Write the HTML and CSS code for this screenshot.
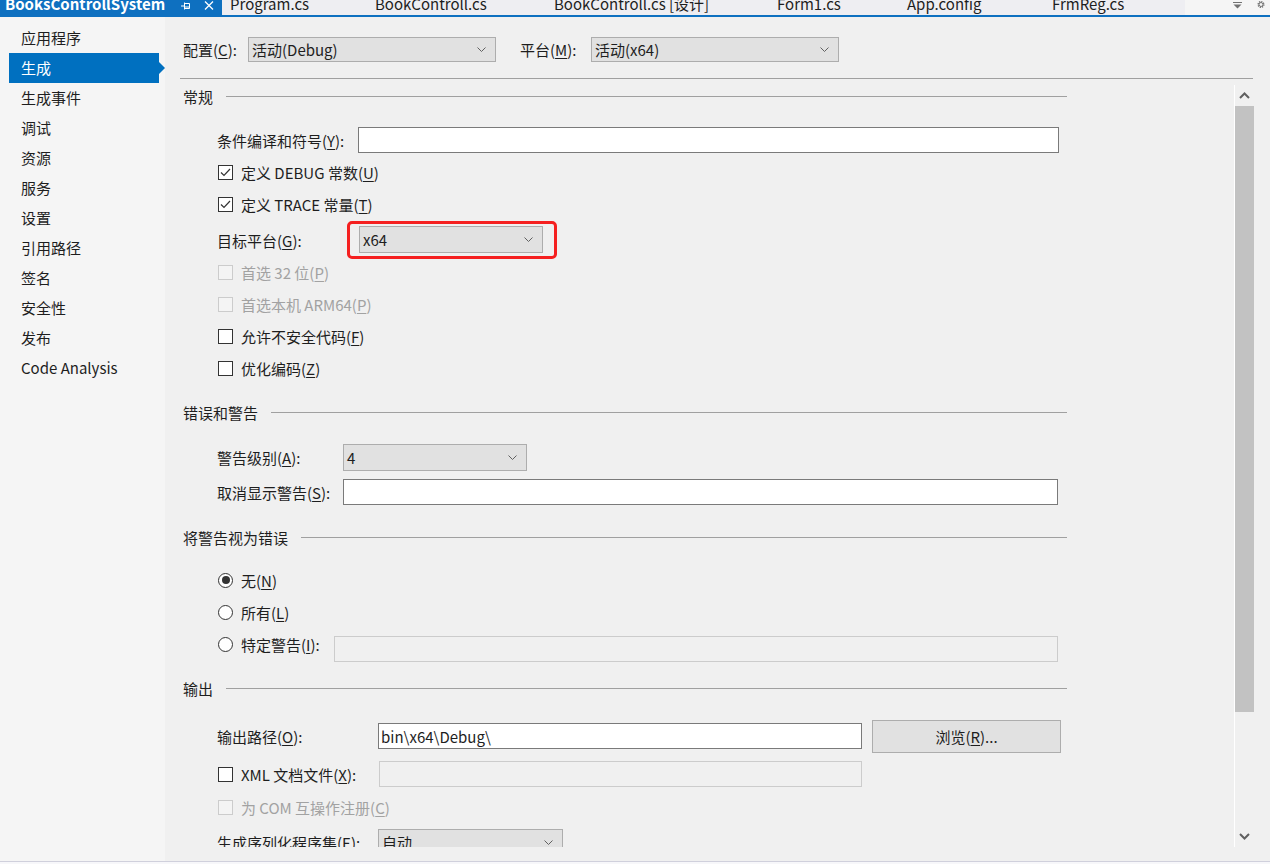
FILE: index.html
```html
<!DOCTYPE html>
<html lang="zh-CN">
<head>
<meta charset="utf-8">
<title>BooksControllSystem - 生成</title>
<link rel="stylesheet" href="styles.css">
</head>
<body>
<div class="tabbar">
  <div class="tab tab-active">
    <span class="tab-text">BooksControllSystem</span>
    <svg class="pin" width="10" height="8" viewBox="0 0 10 8"><path d="M0 4h3M3.5 0.5v7M3.5 1.5h5v5h-5M3.5 5h5" fill="none" stroke="#fff" stroke-width="1"/></svg>
    <svg class="close" width="10" height="9" viewBox="0 0 10 9"><path d="M1 0.5l8 8M9 0.5l-8 8" fill="none" stroke="#fff" stroke-width="1.3"/></svg>
  </div>
  <div class="tab t145"><span class="tab-text">Program.cs</span></div>
  <div class="tab t179"><span class="tab-text">BookControll.cs</span></div>
  <div class="tab t223"><span class="tab-text">BookControll.cs [设计]</span></div>
  <div class="tab t130"><span class="tab-text">Form1.cs</span></div>
  <div class="tab t145"><span class="tab-text">App.config</span></div>
  <div class="tab t141"><span class="tab-text">FrmReg.cs</span></div>
  <div class="tab-rest">
    <svg width="9" height="7" viewBox="0 0 9 7"><path d="M0 0.5h9" stroke="#717171"/><path d="M0.5 2.5h8l-4 4z" fill="#717171"/></svg>
    <svg class="gear" width="12" height="9" viewBox="0 -3 12 12"><circle cx="6" cy="3" r="3.6" fill="none" stroke="#717171" stroke-width="2.2" stroke-dasharray="1.6 1.2"/><circle cx="6" cy="3" r="2.6" fill="none" stroke="#717171" stroke-width="1.2"/></svg>
  </div>
</div>

<div class="window">
  <div class="nav">
    <div class="nav-item">应用程序</div>
    <div class="nav-item selected">生成</div>
    <div class="nav-item">生成事件</div>
    <div class="nav-item">调试</div>
    <div class="nav-item">资源</div>
    <div class="nav-item">服务</div>
    <div class="nav-item">设置</div>
    <div class="nav-item">引用路径</div>
    <div class="nav-item">签名</div>
    <div class="nav-item">安全性</div>
    <div class="nav-item">发布</div>
    <div class="nav-item">Code Analysis</div>
  </div>

  <div class="panel">
    <div class="config-row">
      <span class="lbl l65">配置(<u>C</u>):</span>
      <div class="ddl w248"><span>活动(Debug)</span><svg width="9" height="5" viewBox="0 0 9 5"><path d="M0.5 0.5l4 4 4-4" fill="none" stroke="#606060"/></svg></div>
      <span class="lbl l71 gap24">平台(<u>M</u>):</span>
      <div class="ddl w248"><span>活动(x64)</span><svg width="9" height="5" viewBox="0 0 9 5"><path d="M0.5 0.5l4 4 4-4" fill="none" stroke="#606060"/></svg></div>
    </div>
    <div class="sep"></div>

    <div class="scroll">
      <div class="page">
        <div class="group-head first">常规</div>

        <div class="row m18">
          <span class="lbl l141">条件编译和符号(<u>Y</u>):</span>
          <div class="txt w701"></div>
        </div>
        <div class="row">
          <span class="chk checked"><svg width="11" height="9" viewBox="0 0 11 9"><path d="M1 4.5l3 3 6-6.5" fill="none" stroke="#333" stroke-width="1.2"/></svg></span>
          <span class="opt">定义 DEBUG 常数(<u>U</u>)</span>
        </div>
        <div class="row">
          <span class="chk checked"><svg width="11" height="9" viewBox="0 0 11 9"><path d="M1 4.5l3 3 6-6.5" fill="none" stroke="#333" stroke-width="1.2"/></svg></span>
          <span class="opt">定义 TRACE 常量(<u>T</u>)</span>
        </div>
        <div class="row m4">
          <span class="lbl l130">目标平台(<u>G</u>):</span>
          <div class="mark">
            <div class="ddl w184 h27"><span>x64</span><svg width="9" height="5" viewBox="0 0 9 5"><path d="M0.5 0.5l4 4 4-4" fill="none" stroke="#606060"/></svg></div>
          </div>
        </div>
        <div class="row off">
          <span class="chk"></span>
          <span class="opt">首选 32 位(<u>P</u>)</span>
        </div>
        <div class="row off">
          <span class="chk"></span>
          <span class="opt">首选本机 ARM64(<u>P</u>)</span>
        </div>
        <div class="row">
          <span class="chk"></span>
          <span class="opt">允许不安全代码(<u>F</u>)</span>
        </div>
        <div class="row">
          <span class="chk"></span>
          <span class="opt">优化编码(<u>Z</u>)</span>
        </div>

        <div class="group-head">错误和警告</div>
        <div class="row tall m18">
          <span class="lbl l126">警告级别(<u>A</u>):</span>
          <div class="ddl w184 h27"><span>4</span><svg width="9" height="5" viewBox="0 0 9 5"><path d="M0.5 0.5l4 4 4-4" fill="none" stroke="#606060"/></svg></div>
        </div>
        <div class="row tall m1">
          <span class="lbl l126">取消显示警告(<u>S</u>):</span>
          <div class="txt w715"></div>
        </div>

        <div class="group-head">将警告视为错误</div>
        <div class="row m17">
          <span class="radio on"></span>
          <span class="opt">无(<u>N</u>)</span>
        </div>
        <div class="row">
          <span class="radio"></span>
          <span class="opt">所有(<u>L</u>)</span>
        </div>
        <div class="row">
          <span class="radio"></span>
          <span class="opt o93">特定警告(<u>I</u>):</span>
          <div class="txt dis w724 low"></div>
        </div>

        <div class="group-head">输出</div>
        <div class="row tall m21">
          <span class="lbl l161">输出路径(<u>O</u>):</span>
          <div class="txt w484"><span>bin\x64\Debug\</span></div>
          <div class="btn">浏览(<u>R</u>)...</div>
        </div>
        <div class="row tall m4">
          <span class="chk"></span>
          <span class="opt o139">XML 文档文件(<u>X</u>):</span>
          <div class="txt dis w483"></div>
        </div>
        <div class="row off">
          <span class="chk"></span>
          <span class="opt">为 COM 互操作注册(<u>C</u>)</span>
        </div>
        <div class="row m3">
          <span class="lbl l161">生成序列化程序集(<u>E</u>):</span>
          <div class="ddl w185 h27"><span>自动</span><svg width="9" height="5" viewBox="0 0 9 5"><path d="M0.5 0.5l4 4 4-4" fill="none" stroke="#606060"/></svg></div>
        </div>
      </div>

      <div class="scrollbar">
        <div class="sb-btn"><svg width="11" height="7" viewBox="0 0 11 7"><path d="M1 6l4.5-4.5 4.5 4.5" fill="none" stroke="#606060" stroke-width="2"/></svg></div>
        <div class="sb-thumb"></div>
        <div class="sb-track"></div>
        <div class="sb-btn"><svg width="11" height="7" viewBox="0 0 11 7"><path d="M1 1l4.5 4.5 4.5-4.5" fill="none" stroke="#606060" stroke-width="2"/></svg></div>
      </div>
    </div>
  </div>
</div>
</body>
</html>
```

FILE: styles.css
```css
body {
  margin: 0;
  background: #f7f7fa;
  font-family: "Noto Sans CJK SC", "Noto Sans", sans-serif;
  font-size: 15px;
  color: #1e1e1e;
  overflow: hidden;
}
u { text-decoration: underline; text-underline-offset: 2px; }

/* document tabs */
.tabbar {
  display: flex;
  height: 15px;
  border-bottom: 2px solid #0e70c0;
  background: #eeeef2;
  overflow: hidden;
}
.tab {
  flex: none;
  display: flex;
  align-items: flex-start;
  padding-left: 8px;
  box-sizing: border-box;
  overflow: hidden;
}
.tab-text {
  line-height: 20px;
  margin-top: -6px;
  white-space: nowrap;
}
.tab-active {
  width: 222px;
  padding-left: 5px;
  background: #0e70c0;
  color: #fff;
  font-weight: bold;
}
.tab-active .pin { margin: 2px 0 0 16px; }
.tab-active .close { margin: 1px 0 0 13px; }
.t145 { width: 145px; }
.t179 { width: 179px; }
.t223 { width: 223px; }
.t130 { width: 130px; }
.t141 { width: 141px; }
.tab-rest {
  flex: 1;
  background: #f5f5f5;
  display: flex;
  justify-content: flex-end;
  align-items: flex-start;
  gap: 13px;
  padding: 2px 3px 0 0;
}
.tab-rest .gear { margin-top: -2px; }

/* window body */
.window {
  display: flex;
  height: 845px;
  box-sizing: border-box;
  border-bottom: 1px solid #d0d0dc;
}
.nav {
  width: 165px;
  flex: none;
  background: #f5f5f5;
  padding-top: 6px;
}
.nav-item {
  position: relative;
  margin-left: 9px;
  width: 150px;
  height: 30px;
  line-height: 30px;
  padding-left: 12px;
  box-sizing: border-box;
  white-space: nowrap;
}
.nav-item.selected {
  background: #0070c0;
  color: #fff;
}
.nav-item.selected::after {
  content: "";
  position: absolute;
  right: -6px;
  top: 9px;
  border-left: 6px solid #0070c0;
  border-top: 6px solid transparent;
  border-bottom: 6px solid transparent;
}

.panel {
  flex: 1;
  background: #f0f0f0;
  display: flex;
  flex-direction: column;
  min-width: 0;
}
.config-row {
  display: flex;
  align-items: center;
  margin-top: 20px;
  height: 25px;
  padding-left: 18px;
}
.sep {
  margin: 16px 17px 0 15px;
  border-top: 1px solid #a0a0a0;
}

.scroll {
  display: flex;
  height: 768px;
  overflow: hidden;
  padding-right: 16px;
}
.page {
  flex: 1;
  padding-left: 18px;
}

.group-head {
  display: flex;
  align-items: center;
  width: 884px;
  height: 20px;
  margin-top: 18px;
  white-space: nowrap;
}
.group-head.first { margin-top: 7px; }
.group-head::after {
  content: "";
  flex: 1;
  margin-left: 13px;
  border-top: 1px solid #a0a0a0;
}

.row {
  display: flex;
  align-items: center;
  height: 32px;
  padding-left: 34px;
  white-space: nowrap;
}
.row.tall { height: 34px; }
.m1 { margin-top: 1px; }
.m3 { margin-top: 3px; }
.m4 { margin-top: 4px; }
.m17 { margin-top: 17px; }
.m18 { margin-top: 18px; }
.m21 { margin-top: 21px; }
.row.off { color: #a2a2a2; }

.lbl { flex: none; }
.l65 { width: 65px; }
.l71 { width: 71px; }
.l126 { width: 126px; }
.l130 { width: 130px; }
.l141 { width: 141px; }
.l161 { width: 161px; }
.gap24 { margin-left: 24px; }

.opt { margin-left: 8px; }
.o93 { width: 93px; }
.o139 { width: 138px; }

.chk {
  flex: none;
  width: 15px;
  height: 15px;
  margin-left: 1px;
  box-sizing: border-box;
  border: 1px solid #333;
  background: #fff;
  display: flex;
  align-items: center;
  justify-content: center;
}
.off .chk { border-color: #cccccc; background: #f4f4f4; }

.radio {
  flex: none;
  width: 15px;
  height: 15px;
  margin-left: 1px;
  box-sizing: border-box;
  border: 1px solid #333;
  border-radius: 50%;
  background: #fff;
  display: flex;
  align-items: center;
  justify-content: center;
}
.radio.on::before {
  content: "";
  width: 8px;
  height: 8px;
  border-radius: 50%;
  background: #333;
}

.ddl {
  flex: none;
  display: flex;
  align-items: center;
  justify-content: space-between;
  height: 25px;
  box-sizing: border-box;
  border: 1px solid #adadad;
  background: #e1e1e1;
  padding: 0 9px 0 3px;
}
.h27 { height: 27px; }
.w248 { width: 248px; }
.w184 { width: 184px; }
.w185 { width: 185px; }

.mark {
  flex: none;
  border: 3px solid #f52020;
  border-radius: 5px;
  padding: 2px 11px 3px 9px;
}

.txt {
  flex: none;
  height: 26px;
  box-sizing: border-box;
  border: 1px solid #7a7a7a;
  background: #fff;
  padding-left: 2px;
  display: flex;
  align-items: center;
}
.txt.dis { border-color: #cccccc; background: #f0f0f0; }
.txt.low { margin-top: 10px; }
.w701 { width: 701px; }
.w715 { width: 715px; }
.w724 { width: 724px; }
.w484 { width: 484px; }
.w483 { width: 483px; }

.btn {
  flex: none;
  margin-left: 10px;
  width: 189px;
  height: 33px;
  box-sizing: border-box;
  border: 1px solid #adadad;
  background: #e1e1e1;
  display: flex;
  align-items: center;
  justify-content: center;
}

.scrollbar {
  flex: none;
  width: 20px;
  margin-top: 6px;
  box-sizing: border-box;
  border-left: 1px solid #fff;
  display: flex;
  flex-direction: column;
}
.sb-btn {
  height: 21px;
  display: flex;
  align-items: center;
  justify-content: center;
}
.sb-thumb {
  height: 606px;
  background: #c2c2c2;
}
.sb-track { flex: 1; }
```
